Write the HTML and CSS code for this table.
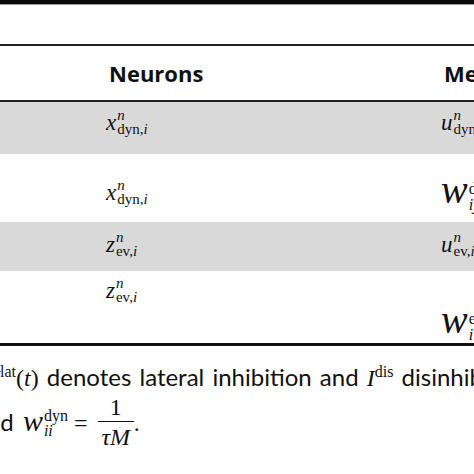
FILE: index.html
```html
<!DOCTYPE html>
<html>
<head>
<meta charset="utf-8">
<link rel="stylesheet" href="styles.css">
</head>
<body>
<div class="page">
  <div class="topbar"></div>
  <div class="caption"></div>
  <div class="table">
    <div class="row head">
      <div class="c0"></div>
      <div class="c1">Neurons</div>
      <div class="c2">Membrane potentials</div>
    </div>
    <div class="row r1 shade">
      <div class="c0"></div>
      <div class="c1"><span class="m"><i>x</i><span class="ss"><span class="sup"><i>n</i></span><span class="sub">dyn,<i>i</i></span></span></span></div>
      <div class="c2"><span class="m"><i>u</i><span class="ss"><span class="sup"><i>n</i></span><span class="sub">dyn,<i>i</i></span></span></span></div>
    </div>
    <div class="row r2">
      <div class="c0"></div>
      <div class="c1"><span class="m"><i>x</i><span class="ss"><span class="sup"><i>n</i></span><span class="sub">dyn,<i>i</i></span></span></span></div>
      <div class="c2"><span class="m mb"><i>w</i><span class="ss"><span class="sup">dyn</span><span class="sub"><i>ij</i></span></span></span></div>
    </div>
    <div class="row r3 shade">
      <div class="c0"></div>
      <div class="c1"><span class="m"><i>z</i><span class="ss"><span class="sup"><i>n</i></span><span class="sub">ev,<i>i</i></span></span></span></div>
      <div class="c2"><span class="m"><i>u</i><span class="ss"><span class="sup"><i>n</i></span><span class="sub">ev,<i>i</i></span></span></span></div>
    </div>
    <div class="row r4">
      <div class="c0"></div>
      <div class="c1"><span class="m"><i>z</i><span class="ss"><span class="sup"><i>n</i></span><span class="sub">ev,<i>i</i></span></span></span></div>
      <div class="c2"><span class="m mb"><i>w</i><span class="ss"><span class="sup">ev</span><span class="sub"><i>il</i></span></span></span></div>
    </div>
  </div>
  <div class="note">
    <div class="line l1"><span class="m mi"><i>I</i><sup class="msup">lat</sup>(<i>t</i>)</span> denotes lateral inhibition and <span class="m mi"><i>I</i><sup class="msup">dis</sup></span> disinhibition</div>
    <div class="line l2">and <span class="m mw"><i>w</i><span class="ss"><span class="sup">dyn</span><span class="sub"><i>ii</i></span></span></span> <span class="m eq">=</span> <span class="frac"><span class="num">1</span><span class="den"><i>τM</i></span></span><span class="m dot">.</span></div>
  </div>
</div>
</body>
</html>
```

FILE: styles.css
```css
html, body {
  margin: 0;
  padding: 0;
  background: #fff;
}
.page {
  width: 474px;
  height: 474px;
  overflow: hidden;
  font-family: "Open Sans", "Liberation Sans", sans-serif;
  font-size: 16px;
  color: #111;
}
.topbar {
  height: 4px;
  background: #0a0a0a;
  border-bottom: 1px solid #9a9a9a;
}
.caption {
  height: 39px;
}
.table {
  border-top: 2px solid #222;
  border-bottom: 3px solid #111;
}
.row {
  display: grid;
  grid-template-columns: 106px 335px 200px;
  white-space: nowrap;
}
.shade {
  background: #d9d9d9;
}
.head {
  height: 54px;
  border-bottom: 2px solid #222;
  font-weight: 700;
  font-size: 22px;
  line-height: 1;
}
.head .c1, .head .c2 {
  padding-top: 16px;
  padding-left: 3px;
}
.r1 { height: 52px; }
.r2 { height: 68px; }
.r3 { height: 49px; }
.r4 { height: 72px; }

.m {
  font-family: "Liberation Serif", "Times New Roman", serif;
  font-size: 23px;
  line-height: 1;
  font-style: normal;
}
.m i { font-style: italic; }
.ss {
  display: inline-block;
  font-size: 15px;
  line-height: 14px;
  vertical-align: -4px;
  margin-left: 1px;
}
.ss > span { display: block; }
.c1, .c2 { line-height: 1; }
.r1 .c1, .r1 .c2 { padding-top: 6px; }
.r2 .c1 { padding-top: 24px; }
.r2 .c2 { padding-top: 16px; }
.r3 .c1, .r3 .c2 { padding-top: 8px; }
.r4 .c1 { padding-top: 5px; }
.r4 .c2 { padding-top: 29px; }
.mb { font-size: 40px; }
.mb .ss { font-size: 16px; line-height: 16px; vertical-align: -7px; }

.note {
  padding-top: 19px;
  font-family: "Lato", "Open Sans", sans-serif;
  font-size: 24px;
  line-height: 1;
}
.line {
  white-space: nowrap;
}
.l1 { margin-left: -8px; height: 30px; word-spacing: 2px; }
.l2 { margin-left: -25px; }
.mi { font-size: 24px; }
.msup { font-size: 16px; vertical-align: 9px; line-height: 0; }
.mw { font-size: 30px; margin-left: 3px; }
.mw .ss { font-size: 16px; line-height: 15px; vertical-align: -5px; }
.eq { font-size: 24px; }
.frac {
  display: inline-block;
  vertical-align: -14px;
  font-family: "Liberation Serif", serif;
  font-size: 24px;
  line-height: 1;
  margin-left: 4px;
  text-align: center;
}
.num { display: block; padding: 0 12px 2px; }
.den { display: block; border-top: 1.5px solid #111; padding: 3px 2px 0; }
.dot { font-size: 24px; }
```
